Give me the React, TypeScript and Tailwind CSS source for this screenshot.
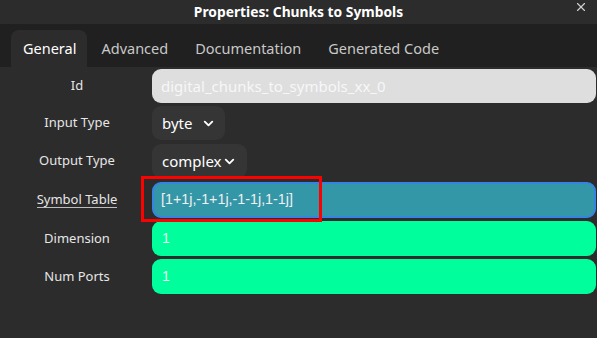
import { ChevronDown, X } from "lucide-react";

const font = { fontFamily: '"Noto Sans", "Open Sans", sans-serif' };

function Label({ text, underline }: { text: string; underline?: boolean }) {
  return (
    <div className="w-[150px] shrink-0 flex items-center justify-center text-[13px] text-[#e6e6e6]">
      <span className={underline ? "border-b border-[#bdbdbd] leading-[15px]" : ""}>{text}</span>
    </div>
  );
}

export default function App() {
  const tabs = ["General", "Advanced", "Documentation", "Generated Code"];
  return (
    <div className="relative w-[597px] h-[338px] bg-[#2c2c2c] overflow-hidden" style={font}>
      <div className="h-[24px] flex items-center justify-center relative bg-[#2c2c2c]">
        <span className="text-[13.8px] font-bold text-white">Properties: Chunks to Symbols</span>
        <X className="absolute right-[9px] top-[0px] w-[14px] h-[14px] text-[#cfcfcf]" strokeWidth={2} />
      </div>
      <div className="h-[43px] bg-[#202020] flex items-end pl-[11px] gap-[1px]">
        {tabs.map((t, i) => (
          <div
            key={t}
            className={
              i === 0
                ? "h-[37px] pl-[12px] pr-[11px] rounded-t-[8px] bg-[#2c2c2c] flex items-center text-[14.5px] text-white"
                : "h-[37px] px-[13px] flex items-center text-[14.5px] text-[#c8c8c8]"
            }
          >
            {t}
          </div>
        ))}
      </div>
      <div className="ml-[2px] pt-[2px] pr-[1px] flex flex-col">
        <div className="flex h-[34px]">
          <Label text="Id" />
          <div className="flex-1 rounded-[9px] bg-[#dedede] flex items-center pl-[9px] text-[15px] text-[#f7f7f7]">
            digital_chunks_to_symbols_xx_0
          </div>
        </div>
        <div className="flex h-[34px] mt-[3px]">
          <Label text="Input Type" />
          <div className="w-[73px] rounded-[9px] bg-[#353535] flex items-center pl-[10px] gap-[9px] text-[15px] text-white">
            byte <ChevronDown className="w-[15px] h-[15px]" strokeWidth={3} />
          </div>
        </div>
        <div className="flex h-[34px] mt-[4px]">
          <Label text="Output Type" />
          <div className="w-[95px] rounded-[9px] bg-[#353535] flex items-center pl-[10px] gap-[0px] text-[15px] text-white">
            complex <ChevronDown className="w-[15px] h-[15px]" strokeWidth={3} />
          </div>
        </div>
        <div className="flex h-[36px] mt-[4px]">
          <Label text="Symbol Table" underline />
          <div
            className="flex-1 rounded-[9px] bg-[#3497a8] border-2 border-[#3584e4] flex items-center pl-[7px] text-[14.3px] text-[#f0f0f0]"
            style={{ fontFamily: '"Liberation Sans", Arial, sans-serif' }}
          >
            [1+1j,-1+1j,-1-1j,1-1j]
          </div>
        </div>
        <div className="flex h-[35px] mt-[3px]">
          <Label text="Dimension" />
          <div
            className="flex-1 rounded-[9px] bg-[#00ff9c] flex items-center pl-[10px] text-[14px] text-[#e8fff0]"
            style={{ fontFamily: '"Liberation Sans", Arial, sans-serif' }}
          >
            1
          </div>
        </div>
        <div className="flex h-[35px] mt-[3px]">
          <Label text="Num Ports" />
          <div
            className="flex-1 rounded-[9px] bg-[#00ff9c] flex items-center pl-[10px] text-[14px] text-[#e8fff0]"
            style={{ fontFamily: '"Liberation Sans", Arial, sans-serif' }}
          >
            1
          </div>
        </div>
      </div>
      <div className="absolute left-[141px] top-[176px] w-[181px] h-[46px] border-[3px] border-[#ff0000]" />
    </div>
  );
}
